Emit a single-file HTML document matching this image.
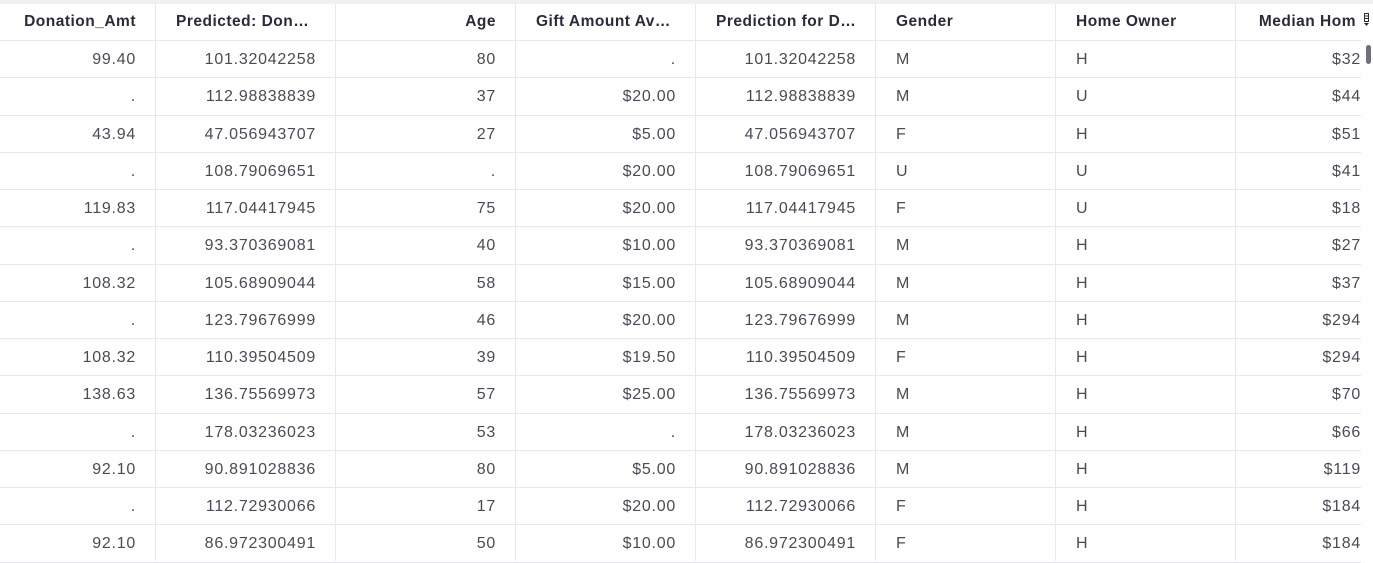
<!DOCTYPE html>
<html><head><meta charset="utf-8">
<style>
*{margin:0;padding:0;box-sizing:border-box}
body{width:1373px;height:563px;overflow:hidden;background:#fff;font-family:"Liberation Sans",sans-serif;position:relative}
.top{position:absolute;left:0;top:0;width:1373px;height:4px;background:#f0f0f3}
.vl{position:absolute;top:4px;height:557px;width:1px;background:#e8e8ec}
.hl{position:absolute;left:0;width:1361px;height:1px;background:#e8e8ec}
.c{position:absolute;height:37px;line-height:37px;font-size:16px;letter-spacing:0.75px;color:#4a4a58;white-space:nowrap;overflow:hidden}
.h{font-weight:bold;color:#2a2a3a;font-size:15.5px;letter-spacing:0.5px}
.r{text-align:right}
.sb{position:absolute;left:1366px;top:45px;width:5px;height:19px;border-radius:3px;background:#6e7080}
</style></head><body>
<div class="top"></div>
<div id="g"></div>
<div class="sb"></div>
<script>
const cols=[[0,155,'r'],[155,335,'r'],[335,515,'r'],[515,695,'r'],[695,875,'r'],[875,1055,'l'],[1055,1235,'l'],[1235,1373,'r']];
const heads=['Donation_Amt','Predicted: Don…','Age','Gift Amount Av…','Prediction for D…','Gender','Home Owner','Median Hom'];
const headAl=['r','l','r','l','l','l','l','r'];
const rows=[
['99.40','101.32042258','80','.','101.32042258','M','H','$32'],
['.','112.98838839','37','$20.00','112.98838839','M','U','$44'],
['43.94','47.056943707','27','$5.00','47.056943707','F','H','$51'],
['.','108.79069651','.','$20.00','108.79069651','U','U','$41'],
['119.83','117.04417945','75','$20.00','117.04417945','F','U','$18'],
['.','93.370369081','40','$10.00','93.370369081','M','H','$27'],
['108.32','105.68909044','58','$15.00','105.68909044','M','H','$37'],
['.','123.79676999','46','$20.00','123.79676999','M','H','$294'],
['108.32','110.39504509','39','$19.50','110.39504509','F','H','$294'],
['138.63','136.75569973','57','$25.00','136.75569973','M','H','$70'],
['.','178.03236023','53','.','178.03236023','M','H','$66'],
['92.10','90.891028836','80','$5.00','90.891028836','M','H','$119'],
['.','112.72930066','17','$20.00','112.72930066','F','H','$184'],
['92.10','86.972300491','50','$10.00','86.972300491','F','H','$184']];
let h='';
[155,335,515,695,875,1055,1235].forEach(x=>h+=`<div class="vl" style="left:${x}px"></div>`);
const rh=37.25;
for(let i=0;i<=14;i++){h+=`<div class="hl" style="top:${Math.round(40+i*rh)}px"></div>`}
function cell(t,ci,y,cls,al){const [a,b]=cols[ci];
 if(al==='r'){const right=ci===7?(cls?17:12):19;h+=`<div class="c r ${cls}" style="left:${a}px;width:${b-a}px;padding-right:${right}px;top:${y}px">${t}</div>`}
 else h+=`<div class="c ${cls}" style="left:${a+21}px;width:${b-a-21}px;top:${y}px">${t}</div>`}
heads.forEach((t,i)=>cell(t,i,3,'h',headAl[i]));
h+=`<svg style="position:absolute;left:1363px;top:13px" width="7" height="14" viewBox="0 0 7 14"><rect x="1.5" y="0.5" width="4" height="8" fill="none" stroke="#2a2a3a" stroke-width="1"/><line x1="1.5" y1="3" x2="5.5" y2="3" stroke="#2a2a3a"/><line x1="1.5" y1="5.5" x2="5.5" y2="5.5" stroke="#2a2a3a"/><path d="M1 10h5l-2.5 3z" fill="#2a2a3a"/></svg>`;
rows.forEach((r,ri)=>{const y=Math.round(41+ri*rh);r.forEach((t,ci)=>cell(t,ci,y,'',cols[ci][2]))});
document.getElementById('g').innerHTML=h;
</script>
</body></html>
